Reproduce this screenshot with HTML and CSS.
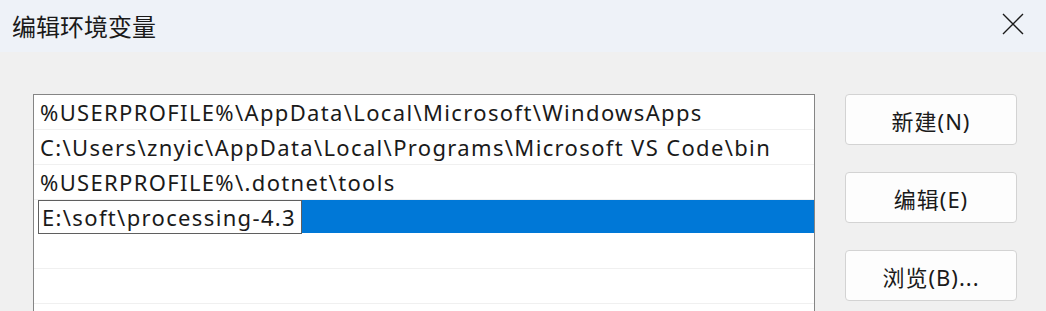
FILE: index.html
```html
<!DOCTYPE html>
<html lang="zh-CN">
<head>
    <meta charset="UTF-8">
    <title>编辑环境变量</title>
    <link rel="stylesheet" href="styles.css">
</head>
<body>
    <div class="window">
        <div class="titlebar">
            <span class="title">编辑环境变量</span>
            <svg class="close" width="22" height="22" viewBox="0 0 22 22">
                <path d="M1 1 L21 21 M21 1 L1 21" stroke="#1a1a1a" stroke-width="1.4" fill="none"/>
            </svg>
        </div>
        <div class="content">
            <div class="list">
                <div class="row">%USERPROFILE%\AppData\Local\Microsoft\WindowsApps</div>
                <div class="row">C:\Users\znyic\AppData\Local\Programs\Microsoft VS Code\bin</div>
                <div class="row">%USERPROFILE%\.dotnet\tools</div>
                <div class="row editing">
                    <div class="edit-box">E:\soft\processing-4.3</div>
                    <div class="highlight"></div>
                </div>
                <div class="row"></div>
                <div class="row"></div>
            </div>
            <div class="buttons">
                <button>新建(N)</button>
                <button>编辑(E)</button>
                <button>浏览(B)...</button>
            </div>
        </div>
    </div>
</body>
</html>
```

FILE: styles.css
```css
body {
    margin: 0;
    background: #f0f0f0;
    font-family: "Noto Sans", "Noto Sans CJK SC", sans-serif;
    color: #1a1a1a;
    overflow: hidden;
}
.window {
    width: 1046px;
    height: 311px;
    overflow: hidden;
}
.titlebar {
    height: 52px;
    background: #eef2f8;
    display: flex;
    align-items: center;
    justify-content: space-between;
    padding: 0 22px 0 12px;
}
.title {
    font-family: "Noto Sans CJK SC", sans-serif;
    font-size: 24px;
    margin-top: -2px;
}
.close {
    margin-top: -4px;
}
.content {
    display: flex;
    padding: 42px 0 0 33px;
}
.list {
    width: 780px;
    height: 240px;
    border: 1px solid #858585;
    background: #ffffff;
}
.row {
    height: 34px;
    border-bottom: 1px solid #f0f0f0;
    padding-left: 6px;
    font-size: 22px;
    letter-spacing: 1.35px;
    line-height: 34px;
    white-space: nowrap;
}
.row.editing {
    display: flex;
    padding-left: 4px;
    border-bottom: none;
    height: 34px;
}
.edit-box {
    width: 259px;
    height: 32px;
    border: 1px solid #5f5f5f;
    line-height: 32px;
    padding-left: 3px;
    background: #ffffff;
}
.highlight {
    flex: 1;
    background: #0078d7;
    height: 33px;
}
.buttons {
    display: flex;
    flex-direction: column;
    gap: 27px;
    margin-left: 30px;
}
button {
    width: 172px;
    height: 51px;
    background: #fdfdfd;
    border: 1px solid #d3d3d3;
    border-radius: 4px;
    font-family: "Noto Sans", "Noto Sans CJK SC", sans-serif;
    font-size: 22px;
    letter-spacing: 1px;
    color: #1a1a1a;
    padding: 0;
}
```
